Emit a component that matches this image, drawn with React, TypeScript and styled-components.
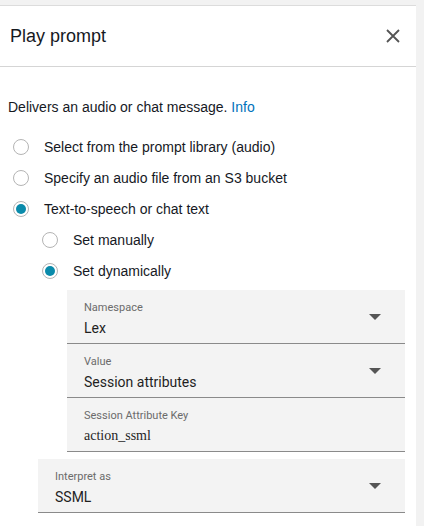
import React, { useState } from "react";
import styled, { createGlobalStyle } from "styled-components";

const GlobalStyle = createGlobalStyle`
  html, body {
    margin: 0;
    padding: 0;
    background: #f2f2f2;
  }
`;

const Page = styled.div`
  padding-top: 5px;
  padding-right: 8px;
  height: 521px;
  overflow: hidden;
`;

const Panel = styled.div`
  background: #fff;
  border-top: 1px solid #dcdcdc;
  height: 100%;
  font-family: "Liberation Sans", Arial, sans-serif;
  color: #16191f;
`;

const Header = styled.div`
  height: 60px;
  display: flex;
  align-items: center;
  justify-content: space-between;
  padding: 0 10px;
  border-bottom: 1px solid #d5d5d5;
`;

const Title = styled.h2`
  margin: 0;
  font-size: 18px;
  font-weight: 400;
  color: #16191f;
`;

const CloseButton = styled.button`
  background: none;
  border: none;
  padding: 0;
  margin-right: 3px;
  width: 20px;
  height: 20px;
  display: flex;
  align-items: center;
  justify-content: center;
  cursor: pointer;
`;

const Body = styled.div`
  padding: 30px 11px 0 8px;
`;

const Description = styled.p`
  margin: 0 0 14px;
  font-size: 14px;
  line-height: 20px;

  a {
    color: #0073bb;
    text-decoration: none;
  }
`;

const RadioRow = styled.label<{ $indent?: boolean }>`
  display: flex;
  align-items: center;
  height: 31px;
  padding-left: ${(p) => (p.$indent ? 34 : 5)}px;
  font-size: 14px;
  cursor: pointer;
`;

const RadioCircle = styled.span<{ $checked: boolean }>`
  box-sizing: border-box;
  width: 16px;
  height: 16px;
  border-radius: 50%;
  border: 1.5px solid #b4b4b4;
  margin-right: 15px;
  flex-shrink: 0;
  display: flex;
  align-items: center;
  justify-content: center;

  &::after {
    content: "";
    width: 10px;
    height: 10px;
    border-radius: 50%;
    background: ${(p) => (p.$checked ? "#0a8bab" : "transparent")};
  }
`;

const Fields = styled.div`
  margin-top: 4px;
  display: flex;
  flex-direction: column;
`;

const Field = styled.div<{ $inset: number; $gap?: number }>`
  box-sizing: border-box;
  height: 54px;
  margin-left: ${(p) => p.$inset}px;
  margin-top: ${(p) => p.$gap ?? 0}px;
  background: #f3f3f3;
  border-bottom: 1px solid #8a8a8a;
  padding: 6px 24px 0 17px;
  display: flex;
  align-items: center;
  justify-content: space-between;
`;

const FieldText = styled.div`
  display: flex;
  flex-direction: column;
`;

const FieldLabel = styled.span`
  font-family: Roboto, "Liberation Sans", sans-serif;
  font-size: 11px;
  line-height: 14px;
  color: #6b6b6b;
`;

const FieldValue = styled.span<{ $serif?: boolean }>`
  font-family: ${(p) =>
    p.$serif ? '"Liberation Serif", serif' : 'Roboto, "Liberation Sans", sans-serif'};
  font-size: 14px;
  line-height: 20px;
  margin-top: 3px;
  color: #1f1f1f;
`;

const Caret = styled.span`
  width: 0;
  height: 0;
  border-left: 6px solid transparent;
  border-right: 6px solid transparent;
  border-top: 6px solid #555;
  margin-bottom: 5px;
`;

const sources = [
  "Select from the prompt library (audio)",
  "Specify an audio file from an S3 bucket",
  "Text-to-speech or chat text",
];

const modes = ["Set manually", "Set dynamically"];

const SelectField = ({
  label,
  value,
  inset,
  gap,
}: {
  label: string;
  value: string;
  inset: number;
  gap?: number;
}) => (
  <Field $inset={inset} $gap={gap}>
    <FieldText>
      <FieldLabel>{label}</FieldLabel>
      <FieldValue>{value}</FieldValue>
    </FieldText>
    <Caret />
  </Field>
);

const App = () => {
  const [source, setSource] = useState(2);
  const [mode, setMode] = useState(1);

  return (
    <Page>
      <GlobalStyle />
      <Panel>
        <Header>
          <Title>Play prompt</Title>
          <CloseButton aria-label="Close">
            <svg width="14" height="14" viewBox="0 0 14 14">
              <path d="M1 1L13 13M13 1L1 13" stroke="#555" strokeWidth="1.8" />
            </svg>
          </CloseButton>
        </Header>
        <Body>
          <Description>
            Delivers an audio or chat message. <a href="#">Info</a>
          </Description>
          {sources.map((s, i) => (
            <RadioRow key={s} onClick={() => setSource(i)}>
              <RadioCircle $checked={source === i} />
              {s}
            </RadioRow>
          ))}
          {modes.map((m, i) => (
            <RadioRow key={m} $indent onClick={() => setMode(i)}>
              <RadioCircle $checked={mode === i} />
              {m}
            </RadioRow>
          ))}
          <Fields>
            <SelectField label="Namespace" value="Lex" inset={59} />
            <SelectField label="Value" value="Session attributes" inset={59} />
            <Field $inset={59}>
              <FieldText>
                <FieldLabel>Session Attribute Key</FieldLabel>
                <FieldValue $serif>action_ssml</FieldValue>
              </FieldText>
            </Field>
            <SelectField label="Interpret as" value="SSML" inset={30} gap={7} />
          </Fields>
        </Body>
      </Panel>
    </Page>
  );
};

export default App;
